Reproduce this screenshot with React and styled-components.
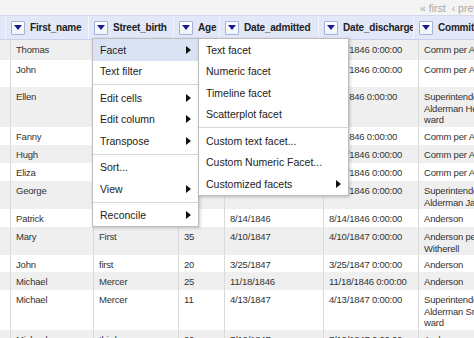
import React from "react";
import styled, { createGlobalStyle } from "styled-components";

const GlobalStyle = createGlobalStyle`
  html, body {
    margin: 0;
    padding: 0;
    background: #fff;
  }
  body {
    font-family: "Liberation Sans", Arial, sans-serif;
    overflow: hidden;
  }
`;

const COLS = [5, 83, 85, 46, 99, 95, 140];

const HEADERS = [
  null,
  "First_name",
  "Street_birth",
  "Age",
  "Date_admitted",
  "Date_discharge",
  "Committed_by",
];

const ROWS = [
  { h: 20, c: ["Thomas", "Cork", "30", "4/28/1846", "4/28/1846 0:00:00", "Comm per Agent"] },
  { h: 27, c: ["John", "Cork", "28", "4/28/1846", "4/28/1846 0:00:00", "Comm per Agent"] },
  { h: 40, c: ["Ellen", "Mercer", "22", "5/4/1846", "5/4/1846 0:00:00", "Superintendent\nAlderman Herrick\nward"] },
  { h: 18, c: ["Fanny", "Mercer", "19", "5/9/1846", "5/9/1846 0:00:00", "Comm per Agent"] },
  { h: 18, c: ["Hugh", "first", "40", "5/12/1846", "5/12/1846 0:00:00", "Comm per Agent"] },
  { h: 18, c: ["Eliza", "first", "26", "5/16/1846", "5/16/1846 0:00:00", "Comm per Agent"] },
  { h: 28, c: ["George", "third", "33", "5/26/1846", "5/26/1846 0:00:00", "Superintendent\nAlderman Jackson"] },
  { h: 18, c: ["Patrick", "Mercer", "45", "8/14/1846", "8/14/1846 0:00:00", "Anderson"] },
  { h: 28, c: ["Mary", "First", "35", "4/10/1847", "4/10/1847 0:00:00", "Anderson per\nWitherell"] },
  { h: 17, c: ["John", "first", "20", "3/25/1847", "3/25/1847 0:00:00", "Anderson"] },
  { h: 18, c: ["Michael", "Mercer", "25", "11/18/1846", "11/18/1846 0:00:00", "Anderson"] },
  { h: 40, c: ["Michael", "Mercer", "11", "4/13/1847", "4/13/1847 0:00:00", "Superintendent\nAlderman Smith\nward"] },
  { h: 18, c: ["Michael", "third", "20", "7/12/1847", "7/12/1847 0:00:00", "Anderson"] },
];

const MAIN_MENU = [
  { label: "Facet", sub: true, active: true },
  { label: "Text filter" },
  { sep: true },
  { label: "Edit cells", sub: true },
  { label: "Edit column", sub: true },
  { label: "Transpose", sub: true },
  { sep: true },
  { label: "Sort..." },
  { label: "View", sub: true },
  { sep: true },
  { label: "Reconcile", sub: true },
];

const FACET_MENU = [
  { label: "Text facet" },
  { label: "Numeric facet" },
  { label: "Timeline facet" },
  { label: "Scatterplot facet" },
  { sep: true },
  { label: "Custom text facet..." },
  { label: "Custom Numeric Facet..." },
  { label: "Customized facets", sub: true },
];

const Page = styled.div`
  position: relative;
  width: 474px;
  height: 338px;
  overflow: hidden;
  background: #fff;
`;

const TopBar = styled.div`
  display: flex;
  align-items: center;
  height: 16px;
  padding-left: 420px;
  gap: 6px;
  background: #f4f4f4;
  border-bottom: 1px solid #d3d9ec;
  box-sizing: border-box;
  font-size: 10.5px;
  color: #a8a8a8;
  white-space: nowrap;
`;

const HeaderRow = styled.div`
  display: flex;
  height: 24px;
  background: #e2e8f8;
  border-bottom: 1px solid #c9d1ea;
  box-sizing: border-box;
`;

const HeaderCell = styled.div`
  flex: 0 0 ${(p) => p.$w}px;
  display: flex;
  align-items: center;
  gap: 5px;
  padding-left: 5px;
  box-sizing: border-box;
  border-right: 1px solid #f4f6fd;
  font-size: 10px;
  letter-spacing: -0.2px;
  font-weight: bold;
  color: #222;
  white-space: nowrap;
  overflow: hidden;
`;

const DropButton = styled.span`
  flex: 0 0 14px;
  height: 14px;
  box-sizing: border-box;
  display: flex;
  align-items: center;
  justify-content: center;
  background: linear-gradient(#ffffff, #f1f3fb);
  border: 1px solid #a6b1da;
  border-radius: 1px;
`;

const BodyRow = styled.div`
  display: flex;
  height: ${(p) => p.$h}px;
  background: ${(p) => (p.$odd ? "#efefef" : "#ffffff")};
`;

const Cell = styled.div`
  flex: 0 0 ${(p) => p.$w}px;
  box-sizing: border-box;
  padding: 4px 5px 0;
  border-right: 1px solid #dadada;
  font-size: 9.5px;
  letter-spacing: -0.2px;
  line-height: 11.5px;
  color: #333;
  white-space: pre-line;
  overflow: hidden;
`;

const Menu = styled.div`
  position: absolute;
  top: ${(p) => p.$top}px;
  left: ${(p) => p.$left}px;
  width: ${(p) => p.$w}px;
  box-sizing: border-box;
  display: flex;
  flex-direction: column;
  background: #fff;
  border: 1px solid #bdbdbd;
  box-shadow: 1px 1px 3px rgba(0, 0, 0, 0.22);
`;

const MenuItem = styled.div`
  height: 21.5px;
  display: flex;
  align-items: center;
  justify-content: space-between;
  padding: 0 7px 0 7px;
  font-size: 10.5px;
  color: #222;
  white-space: nowrap;
  background: ${(p) => (p.$active ? "#dae3f3" : "transparent")};
`;

const Separator = styled.div`
  height: 1px;
  margin: 2px 0;
  background: #d6d6d6;
`;

const Caret = () => (
  <svg width="8" height="5" viewBox="0 0 8 5">
    <polygon points="0,0 8,0 4,5" fill="#1b1b96" />
  </svg>
);

const Arrow = () => (
  <svg width="5" height="8" viewBox="0 0 5 8">
    <polygon points="0,0 5,4 0,8" fill="#111" />
  </svg>
);

const MenuList = ({ items, top, left, w }) => (
  <Menu $top={top} $left={left} $w={w}>
    {items.map((it, i) =>
      it.sep ? (
        <Separator key={i} />
      ) : (
        <MenuItem key={i} $active={it.active}>
          <span>{it.label}</span>
          {it.sub && <Arrow />}
        </MenuItem>
      )
    )}
  </Menu>
);

const App = () => (
  <>
    <GlobalStyle />
    <Page>
      <TopBar>
        <span>« first</span>
        <span>‹ previous</span>
      </TopBar>
      <HeaderRow>
        {HEADERS.map((h, i) => (
          <HeaderCell key={i} $w={COLS[i]}>
            {h && (
              <>
                <DropButton>
                  <Caret />
                </DropButton>
                <span>{h}</span>
              </>
            )}
          </HeaderCell>
        ))}
      </HeaderRow>
      {ROWS.map((r, ri) => (
        <BodyRow key={ri} $h={r.h} $odd={ri % 2 === 0}>
          <Cell $w={COLS[0]} />
          {r.c.map((v, ci) => (
            <Cell key={ci} $w={COLS[ci + 1]}>
              {v}
            </Cell>
          ))}
        </BodyRow>
      ))}
      <MenuList items={MAIN_MENU} top={38} left={92} w={107} />
      <MenuList items={FACET_MENU} top={38} left={198} w={151} />
    </Page>
  </>
);

export default App;
